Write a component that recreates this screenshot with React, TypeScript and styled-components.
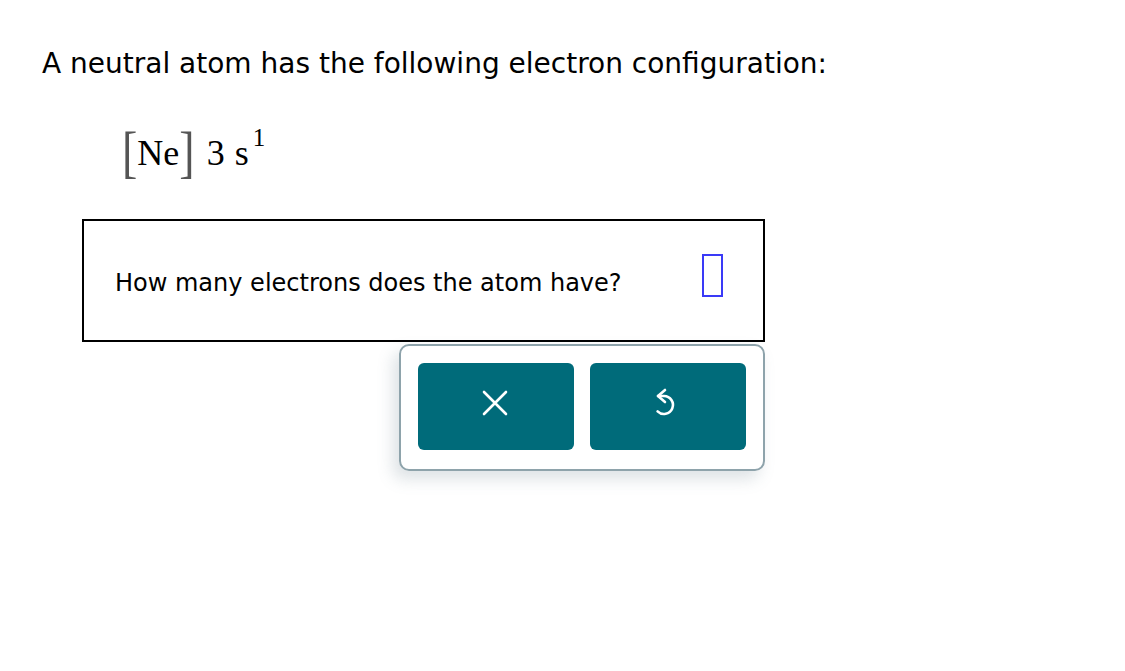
import React from "react";
import styled, { createGlobalStyle } from "styled-components";

const GlobalStyle = createGlobalStyle`
    body {
        margin: 0;
        background: #ffffff;
        font-family: "DejaVu Sans", Verdana, sans-serif;
        color: #000000;
    }
`;

const Page = styled.div`
    padding: 44px 0 0 42px;
    width: 1125px;
    height: 671px;
    box-sizing: border-box;
`;

const Title = styled.p`
    margin: 0;
    font-size: 28px;
    line-height: 40px;
`;

const Config = styled.div`
    margin: 24px 0 0 80px;
    font-family: "Liberation Serif", "Times New Roman", serif;
    font-size: 36px;
    line-height: 60px;
    height: 60px;
    white-space: nowrap;
    color: #000;
`;

const Bracket = styled.span`
    display: inline-block;
    color: #555;
    font-size: 46px;
    line-height: 46px;
    vertical-align: -2px;
    transform: scaleY(1.25);
`;

const Term = styled.span<{ $gap?: number }>`
    margin-left: ${(p) => p.$gap ?? 0}px;
`;

const Sup = styled.span`
    font-size: 25px;
    vertical-align: 19px;
    margin-left: 4px;
`;

const QuestionBox = styled.div`
    margin: 51px 0 0 40px;
    width: 683px;
    height: 123px;
    box-sizing: border-box;
    border: 2px solid #000;
    display: flex;
    align-items: center;
    padding: 0 40px 0 31px;
    justify-content: space-between;
`;

const Question = styled.span`
    font-size: 24px;
    padding-top: 4px;
`;

const AnswerInput = styled.div`
    width: 21px;
    height: 43px;
    margin-bottom: 10px;
    box-sizing: border-box;
    border: 2px solid #3a3af7;
`;

const Toolbar = styled.div`
    margin: 2px 0 0 357px;
    width: 366px;
    height: 127px;
    box-sizing: border-box;
    border: 2px solid #8ea3ab;
    border-radius: 10px;
    box-shadow: -6px 8px 16px rgba(100, 125, 135, 0.22);
    display: flex;
    gap: 16px;
    padding: 17px 17px 0 17px;
`;

const ActionButton = styled.button`
    width: 156px;
    height: 87px;
    border: none;
    border-radius: 6px;
    background: #006b7a;
    color: #ffffff;
    display: flex;
    align-items: center;
    justify-content: center;
    padding: 0;
    cursor: pointer;
`;

const ClearIcon = () => (
    <svg width="40" height="40" viewBox="0 0 40 40" fill="none" stroke="currentColor" strokeWidth="2.6" strokeLinecap="round">
        <path d="M8 5 L30 27 M30 5 L8 27" />
    </svg>
);

const UndoIcon = () => (
    <svg width="36" height="41" viewBox="0 0 36 41" fill="none" stroke="currentColor" strokeWidth="2.6" strokeLinecap="round" strokeLinejoin="round">
        <path d="M15 4 L8 10 L15 16" />
        <path d="M8 10 H14 A9 9 0 1 1 7.6 25.4" />
    </svg>
);

export default function App() {
    return (
        <>
            <GlobalStyle />
            <Page>
                <Title>A neutral atom has the following electron configuration:</Title>
                <Config>
                    <Bracket>[</Bracket>
                    <Term>Ne</Term>
                    <Bracket>]</Bracket>
                    <Term $gap={12}>3</Term>
                    <Term $gap={10}>s</Term>
                    <Sup>1</Sup>
                </Config>
                <QuestionBox>
                    <Question>How many electrons does the atom have?</Question>
                    <AnswerInput />
                </QuestionBox>
                <Toolbar>
                    <ActionButton aria-label="clear">
                        <ClearIcon />
                    </ActionButton>
                    <ActionButton aria-label="undo">
                        <UndoIcon />
                    </ActionButton>
                </Toolbar>
            </Page>
        </>
    );
}
